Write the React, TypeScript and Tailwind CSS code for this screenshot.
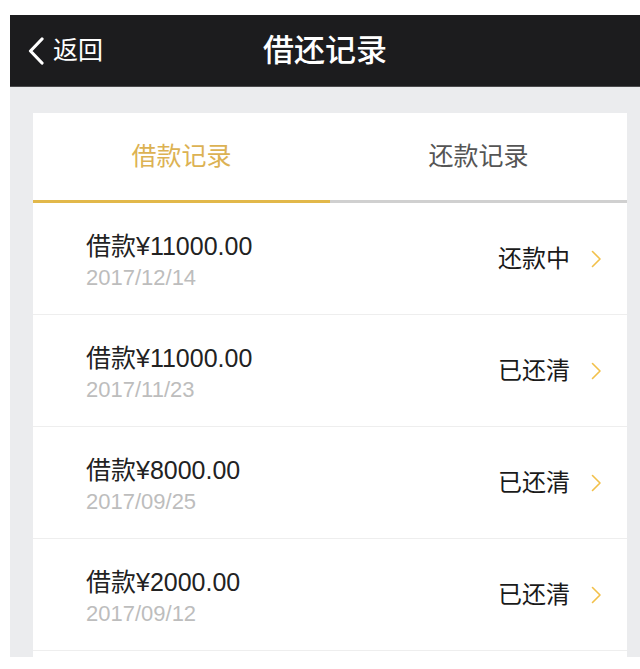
const FONT = "font-['Liberation_Sans','Noto_Sans_CJK_SC',sans-serif]";

type Loan = { amount: string; date: string; status: string };

const loans: Loan[] = [
  { amount: "借款¥11000.00", date: "2017/12/14", status: "还款中" },
  { amount: "借款¥11000.00", date: "2017/11/23", status: "已还清" },
  { amount: "借款¥8000.00", date: "2017/09/25", status: "已还清" },
  { amount: "借款¥2000.00", date: "2017/09/12", status: "已还清" },
];

const Chevron = () => (
  <svg width="11" height="18" viewBox="0 0 11 18" fill="none">
    <path d="M1.5 1.5 L9 9 L1.5 16.5" stroke="#f2c04a" strokeWidth="1.6" strokeLinecap="round" strokeLinejoin="round" />
  </svg>
);

const LoanRow = ({ loan }: { loan: Loan }) => (
  <div className="flex h-[112px] shrink-0 items-center border-b border-[#eeeeee] pl-[53px] pr-[25px]">
    <div className="flex flex-1 flex-col pt-[4px]">
      <span className="text-[25px] leading-[30px] text-[#222222]">{loan.amount}</span>
      <span className="mt-[5px] text-[22px] leading-[24px] text-[#bdbdbd]">{loan.date}</span>
    </div>
    <span className="text-[24px] leading-[28px] text-[#1a1a1a]">{loan.status}</span>
    <span className="ml-[21px] flex items-center">
      <Chevron />
    </span>
  </div>
);

export default function App() {
  return (
    <div className={`h-[669px] w-[640px] overflow-hidden bg-white pb-[12px] pl-[10px] pt-[15px] ${FONT}`}>
      <div className="flex h-full flex-col">
        <header className="grid h-[72px] shrink-0 grid-cols-[1fr_auto_1fr] items-center border-b border-[#4a4a4c] bg-[#1c1c1e] px-[17px]">
          <div className="flex items-center gap-[8px] text-white">
            <svg width="18" height="28" viewBox="0 0 18 28" fill="none">
              <path d="M15 2 L3.5 14 L15 26" stroke="white" strokeWidth="3.2" strokeLinecap="round" strokeLinejoin="round" />
            </svg>
            <span className="text-[25px] leading-none">返回</span>
          </div>
          <h1 className="text-[31px] font-medium leading-none text-white">借还记录</h1>
          <div />
        </header>

        <main className="flex min-h-0 flex-1 flex-col bg-[#ebecee] pl-[23px] pr-[13px] pt-[26px]">
          <div className="flex min-h-0 flex-1 flex-col overflow-hidden bg-white">
            <nav className="flex h-[90px] shrink-0">
              <button className="flex flex-1 items-center justify-center border-b-[3px] border-[#e2b84a] text-[25px] text-[#dcb253]">
                借款记录
              </button>
              <button className="flex flex-1 items-center justify-center border-b-[3px] border-[#d0d0d0] text-[25px] text-[#555555]">
                还款记录
              </button>
            </nav>
            {loans.map((loan, i) => (
              <LoanRow key={i} loan={loan} />
            ))}
          </div>
        </main>
      </div>
    </div>
  );
}
